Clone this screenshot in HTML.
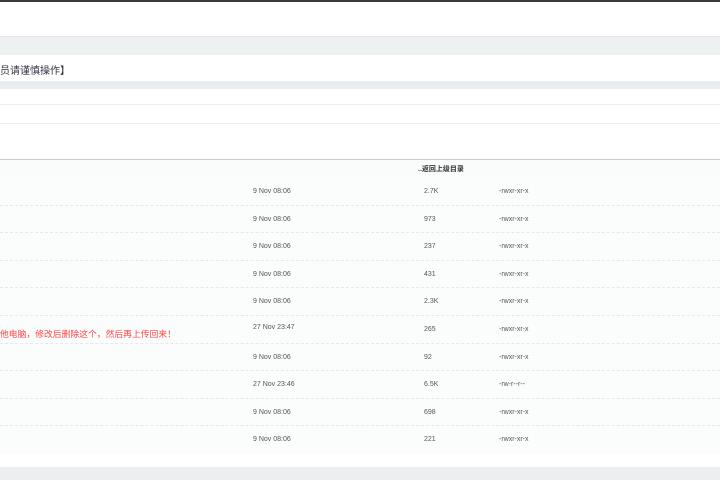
<!DOCTYPE html>
<html><head><meta charset="utf-8"><style>
body{margin:0;width:720px;height:480px;overflow:hidden;background:#fff;font-family:"Liberation Sans","Noto Sans CJK SC",sans-serif;position:relative}
div{position:absolute;left:0;width:720px}
.t{font-size:7px;color:#555;position:absolute}
#rows{top:178px;height:276px}
.row{position:relative;box-sizing:border-box;height:27.6px;background:#fbfcfc;border-bottom:1px dashed #e6e8e9}
.row .t{top:10px}
</style></head><body>
<div style="top:0;height:2px;background:#3a3a3a"></div>
<div style="top:36px;height:18px;background:#eef1f2;border-top:1px solid #e4e6e7"></div>
<div style="top:54px;height:27px"><span style="position:absolute;left:0;top:8px;font-size:10px;color:#334">员请谨慎操作】</span></div>
<div style="top:81px;height:8px;background:#eaedef"></div>
<div style="top:104px;height:1px;background:#eceeef"></div>
<div style="top:123px;height:1px;background:#eceeef"></div>
<div style="top:159px;height:1px;background:#ccc"></div>
<div style="top:160px;height:18px;background:#fafbfb;border-bottom:1px dashed #eee"><span class="t" style="left:418px;top:4px;color:#333;font-weight:bold">..返回上级目录</span></div>
<div id="rows">
<div class="row"><span class="t" style="left:253px">9 Nov 08:06</span><span class="t" style="left:424px">2.7K</span><span class="t" style="left:499px">-rwxr-xr-x</span></div>
<div class="row"><span class="t" style="left:253px">9 Nov 08:06</span><span class="t" style="left:424px">973</span><span class="t" style="left:499px">-rwxr-xr-x</span></div>
<div class="row"><span class="t" style="left:253px">9 Nov 08:06</span><span class="t" style="left:424px">237</span><span class="t" style="left:499px">-rwxr-xr-x</span></div>
<div class="row"><span class="t" style="left:253px">9 Nov 08:06</span><span class="t" style="left:424px">431</span><span class="t" style="left:499px">-rwxr-xr-x</span></div>
<div class="row"><span class="t" style="left:253px">9 Nov 08:06</span><span class="t" style="left:424px">2.3K</span><span class="t" style="left:499px">-rwxr-xr-x</span></div>
<div class="row"><span style="position:absolute;left:0;top:11px;font-size:8.8px;color:#f44">他电脑，修改后删除这个，然后再上传回来！</span><span class="t" style="left:253px;top:8px">27 Nov 23:47</span><span class="t" style="left:424px">265</span><span class="t" style="left:499px">-rwxr-xr-x</span></div>
<div class="row"><span class="t" style="left:253px">9 Nov 08:06</span><span class="t" style="left:424px">92</span><span class="t" style="left:499px">-rwxr-xr-x</span></div>
<div class="row"><span class="t" style="left:253px">27 Nov 23:46</span><span class="t" style="left:424px">6.5K</span><span class="t" style="left:499px">-rw-r--r--</span></div>
<div class="row"><span class="t" style="left:253px">9 Nov 08:06</span><span class="t" style="left:424px">698</span><span class="t" style="left:499px">-rwxr-xr-x</span></div>
<div class="row" style="border-bottom:none"><span class="t" style="left:253px">9 Nov 08:06</span><span class="t" style="left:424px">221</span><span class="t" style="left:499px">-rwxr-xr-x</span></div>
</div>
<div style="top:467px;height:13px;background:#eceff1"></div>
</body></html>
